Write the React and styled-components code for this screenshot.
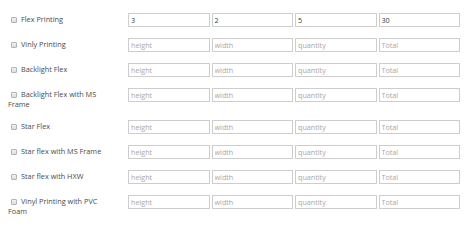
import React from "react"
import styled, { createGlobalStyle } from "styled-components"

const GlobalStyle = createGlobalStyle`
  body {
    margin: 8px;
    background: #fff;
    font-family: "Open Sans", "Noto Sans", sans-serif;
  }
`

// whole form, one grid row per product
const Form = styled.div`
  display: grid;
  grid-template-columns: 100px auto;
  column-gap: 20px;
  row-gap: 11px;
  padding-top: 5px;
  align-items: start;
`

const Label = styled.label`
  display: block;
  padding-top: 1px;
  font-size: 7.3px;
  line-height: 10px;
  color: #4a4a4a;
`

const Check = styled.input`
  appearance: none;
  display: inline-block;
  width: 6px;
  height: 6px;
  margin: 0 4px 0 3px;
  border: 1px solid #b4b4b4;
  border-radius: 1px;
  background: linear-gradient(#f2f2f2, #dcdcdc);
  vertical-align: -0.5px;
`

const Inputs = styled.div`
  display: grid;
  grid-template-columns: repeat(4, 81.5px);
  column-gap: 2px;
`

const Field = styled.input`
  box-sizing: border-box;
  width: 100%;
  height: 14px;
  margin: 0;
  padding: 0 2px;
  border: 1px solid #cdcdcd;
  font-family: "Open Sans", "Noto Sans", sans-serif;
  font-size: 7.2px;
  color: #3a3a3a;
  outline: none;
  &::placeholder {
    color: #a8a8a8;
  }
`

const products = [
  { name: "Flex Printing", values: ["3", "2", "5", "30"] },
  { name: "Vinly Printing" },
  { name: "Backlight Flex" },
  { name: "Backlight Flex with MS Frame" },
  { name: "Star Flex" },
  { name: "Star flex with MS Frame" },
  { name: "Star flex with HXW" },
  { name: "Vinyl Printing with PVC Foam" },
]

const placeholders = ["height", "width", "quantity", "Total"]

export default function App() {
  return (
    <>
      <GlobalStyle />
      <Form>
        {products.map((p, i) => (
          <React.Fragment key={i}>
            <Label>
              <Check type="checkbox" />
              {p.name}
            </Label>
            <Inputs>
              {placeholders.map((ph, j) => (
                <Field
                  key={j}
                  placeholder={ph}
                  defaultValue={p.values ? p.values[j] : undefined}
                />
              ))}
            </Inputs>
          </React.Fragment>
        ))}
      </Form>
    </>
  )
}
